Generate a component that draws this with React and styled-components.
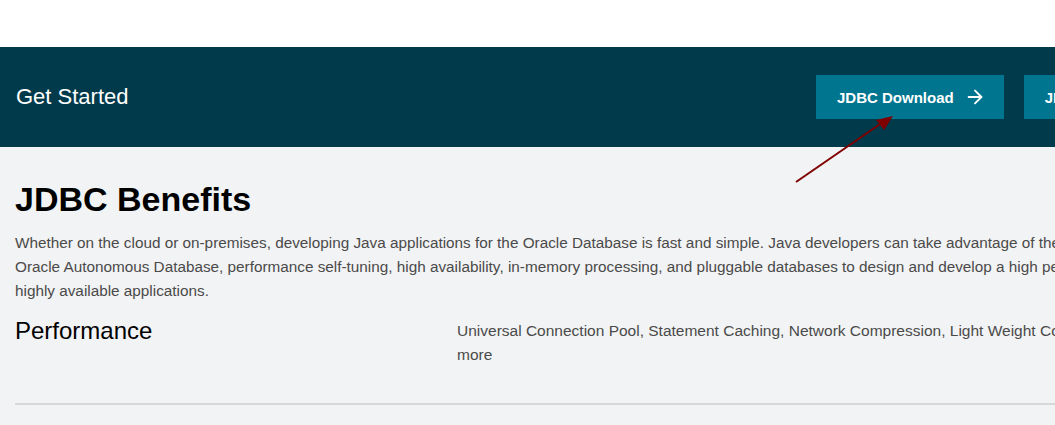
import React from "react";
import styled, { createGlobalStyle } from "styled-components";
import { ArrowRight } from "lucide-react";

const GlobalStyle = createGlobalStyle`
  html, body {
    margin: 0;
    padding: 0;
    overflow: hidden;
    background: #f2f3f4;
    font-family: "Liberation Sans", Arial, sans-serif;
  }
`;

const Page = styled.div`
  position: relative;
  width: 1440px;
`;

const TopBar = styled.div`
  height: 47px;
  background: #ffffff;
`;

const Banner = styled.section`
  height: 100px;
  background: #013a4b;
  display: grid;
  grid-template-columns: 800px auto;
  align-items: center;
  padding-left: 16px;
`;

const BannerTitle = styled.h2`
  margin: 0;
  font-size: 22px;
  font-weight: 400;
  color: #ffffff;
`;

const Buttons = styled.div`
  display: flex;
  gap: 20px;
`;

const CtaButton = styled.a`
  display: flex;
  align-items: center;
  gap: 10px;
  height: 44px;
  padding: 0 18px 0 21px;
  background: #00758f;
  color: #ffffff;
  font-size: 15px;
  font-weight: 700;
  text-decoration: none;
  white-space: nowrap;
`;

const Main = styled.main`
  padding: 30px 15px 0;
`;

const Heading = styled.h1`
  margin: 0 0 10px;
  font-size: 34px;
  line-height: 44px;
  font-weight: 700;
  color: #000000;
`;

const Lead = styled.p`
  margin: 0;
  font-size: 15.3px;
  line-height: 24px;
  color: #4a4a4a;
  white-space: nowrap;
`;

const Feature = styled.div`
  display: grid;
  grid-template-columns: 442px 1fr;
  padding: 12px 0 36px;
  border-bottom: 2px solid #d7d8da;
`;

const FeatureName = styled.h3`
  margin: 0;
  font-size: 24px;
  line-height: 32px;
  font-weight: 400;
  color: #000000;
`;

const FeatureText = styled.p`
  margin: 4px 0 0;
  font-size: 15.5px;
  line-height: 24px;
  color: #4a4a4a;
  white-space: nowrap;
`;

const Annotation = styled.svg`
  position: absolute;
  left: 790px;
  top: 110px;
  pointer-events: none;
`;

export default function App() {
  return (
    <>
      <GlobalStyle />
      <Page>
        <TopBar />
        <Banner>
          <BannerTitle>Get Started</BannerTitle>
          <Buttons>
            <CtaButton href="#">
              JDBC Download <ArrowRight size={22} strokeWidth={2} />
            </CtaButton>
            <CtaButton href="#">
              JDBC Documentation <ArrowRight size={22} strokeWidth={2} />
            </CtaButton>
          </Buttons>
        </Banner>
        <Main>
          <Heading>JDBC Benefits</Heading>
          <Lead>
            Whether on the cloud or on-premises, developing Java applications for the Oracle Database is fast and simple. Java developers can take advantage of the latest features, such as
            <br />
            Oracle Autonomous Database, performance self-tuning, high availability, in-memory processing, and pluggable databases to design and develop a high performance, scalable, and reliable,
            <br />
            highly available applications.
          </Lead>
          <Feature>
            <FeatureName>Performance</FeatureName>
            <FeatureText>
              Universal Connection Pool, Statement Caching, Network Compression, Light Weight Connection Validation, and
              <br />
              more
            </FeatureText>
          </Feature>
        </Main>
        <Annotation width="110" height="80" viewBox="0 0 110 80">
          <line x1="6" y1="72" x2="96" y2="10" stroke="#7f0000" strokeWidth="2" />
          <polygon points="103,6 86,10 94,20" fill="#7f0000" />
        </Annotation>
      </Page>
    </>
  );
}
